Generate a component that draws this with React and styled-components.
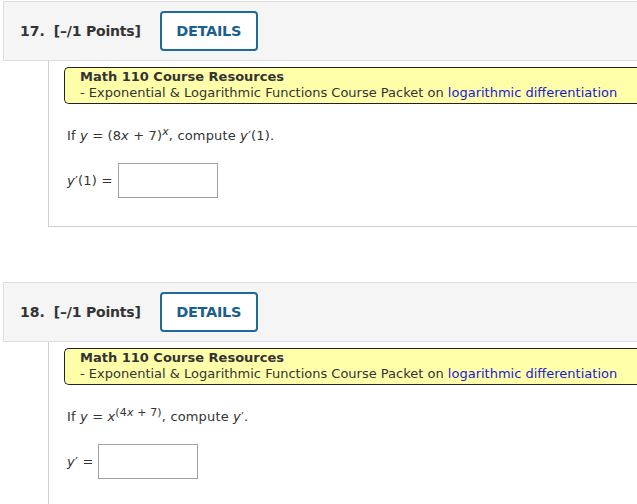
import React from "react";
import styled, { createGlobalStyle } from "styled-components";

const GlobalStyle = createGlobalStyle`
  body {
    margin: 0;
    background: #fff;
    font-family: "DejaVu Sans", Verdana, sans-serif;
    color: #333;
  }
`;

const questions = [
  {
    num: 17,
    prompt: (
      <>
        If <i>y</i> = (8<i>x</i> + 7)<sup><i>x</i></sup>, compute <i>y</i>′(1).
      </>
    ),
    label: (
      <>
        <i>y</i>′(1) =
      </>
    ),
  },
  {
    num: 18,
    prompt: (
      <>
        If <i>y</i> = <i>x</i>
        <sup>(4<i>x</i> + 7)</sup>, compute <i>y</i>′.
      </>
    ),
    label: (
      <>
        <i>y</i>′ =
      </>
    ),
  },
];

const App = () => {
  return (
    <>
      <GlobalStyle />
      <Page>
        {questions.map((q, index) => (
          <Question key={q.num} $last={index === questions.length - 1}>
            <Header>
              <Number>{q.num}.</Number>
              <Points>[–/1 Points]</Points>
              <DetailsButton>DETAILS</DetailsButton>
            </Header>
            <Body $last={index === questions.length - 1}>
              <Resources>
                <ResTitle>Math 110 Course Resources</ResTitle>
                <ResLine>
                  - Exponential &amp; Logarithmic Functions Course Packet on{" "}
                  <ResLink>logarithmic differentiation</ResLink>
                </ResLine>
              </Resources>
              <Prompt>{q.prompt}</Prompt>
              <AnswerRow>
                <AnswerLabel>{q.label}</AnswerLabel>
                <AnswerInput />
              </AnswerRow>
            </Body>
          </Question>
        ))}
      </Page>
    </>
  );
};

export default App;

const Page = styled.div`
  width: 637px;
  height: 504px;
  overflow: hidden;
  padding-top: 1px;
  box-sizing: border-box;
`;

const Question = styled.section`
  margin-bottom: ${(p) => (p.$last ? "0" : "55px")};
`;

const Header = styled.div`
  margin-left: 3px;
  height: 58px;
  display: flex;
  align-items: center;
  padding-left: 16px;
  background: #f5f5f5;
  border: 1px solid #dedede;
  border-right: none;
`;

const Number = styled.span`
  font-size: 14px;
  font-weight: bold;
  color: #333;
  margin-right: 9px;
`;

const Points = styled.span`
  font-size: 14px;
  font-weight: bold;
  color: #333;
  letter-spacing: -0.2px;
  margin-right: 19px;
`;

const DetailsButton = styled.button`
  width: 98px;
  height: 40px;
  border: 2px solid #1f6a9b;
  border-radius: 4px;
  background: #fff;
  color: #1a5f8d;
  font-family: "DejaVu Sans", Verdana, sans-serif;
  font-size: 14.5px;
  font-weight: bold;
  letter-spacing: -0.3px;
  padding: 0;
`;

const Body = styled.div`
  margin-left: 48px;
  border-left: 1px solid #cfcfcf;
  border-bottom: ${(p) => (p.$last ? "none" : "1px solid #cfcfcf")};
  padding: 6px 0 28px 15px;
  min-height: ${(p) => (p.$last ? "200px" : "0")};
`;

const Resources = styled.div`
  background: #ffffaa;
  border: 1px solid #222;
  border-right: none;
  border-radius: 5px 0 0 5px;
  padding: 1px 0 2px 15px;
  font-size: 13px;
  line-height: 16px;
`;

const ResTitle = styled.div`
  font-weight: bold;
  color: #333;
`;

const ResLine = styled.div`
  color: #333;
`;

const ResLink = styled.span`
  color: #1a1ad6;
`;

const Prompt = styled.div`
  margin-top: 24px;
  padding-left: 3px;
  font-size: 13px;
  line-height: 16px;
  letter-spacing: 0.15px;
  color: #333;

  sup {
    font-size: 11px;
    line-height: 0;
  }
`;

const AnswerRow = styled.div`
  margin-top: 19px;
  padding-left: 3px;
  display: flex;
  align-items: center;
  gap: 5px;
`;

const AnswerLabel = styled.span`
  font-size: 13px;
  letter-spacing: 0.2px;
  color: #333;
`;

const AnswerInput = styled.div`
  width: 98px;
  height: 33px;
  border: 1px solid #a0a0a0;
  background: #fff;
`;
